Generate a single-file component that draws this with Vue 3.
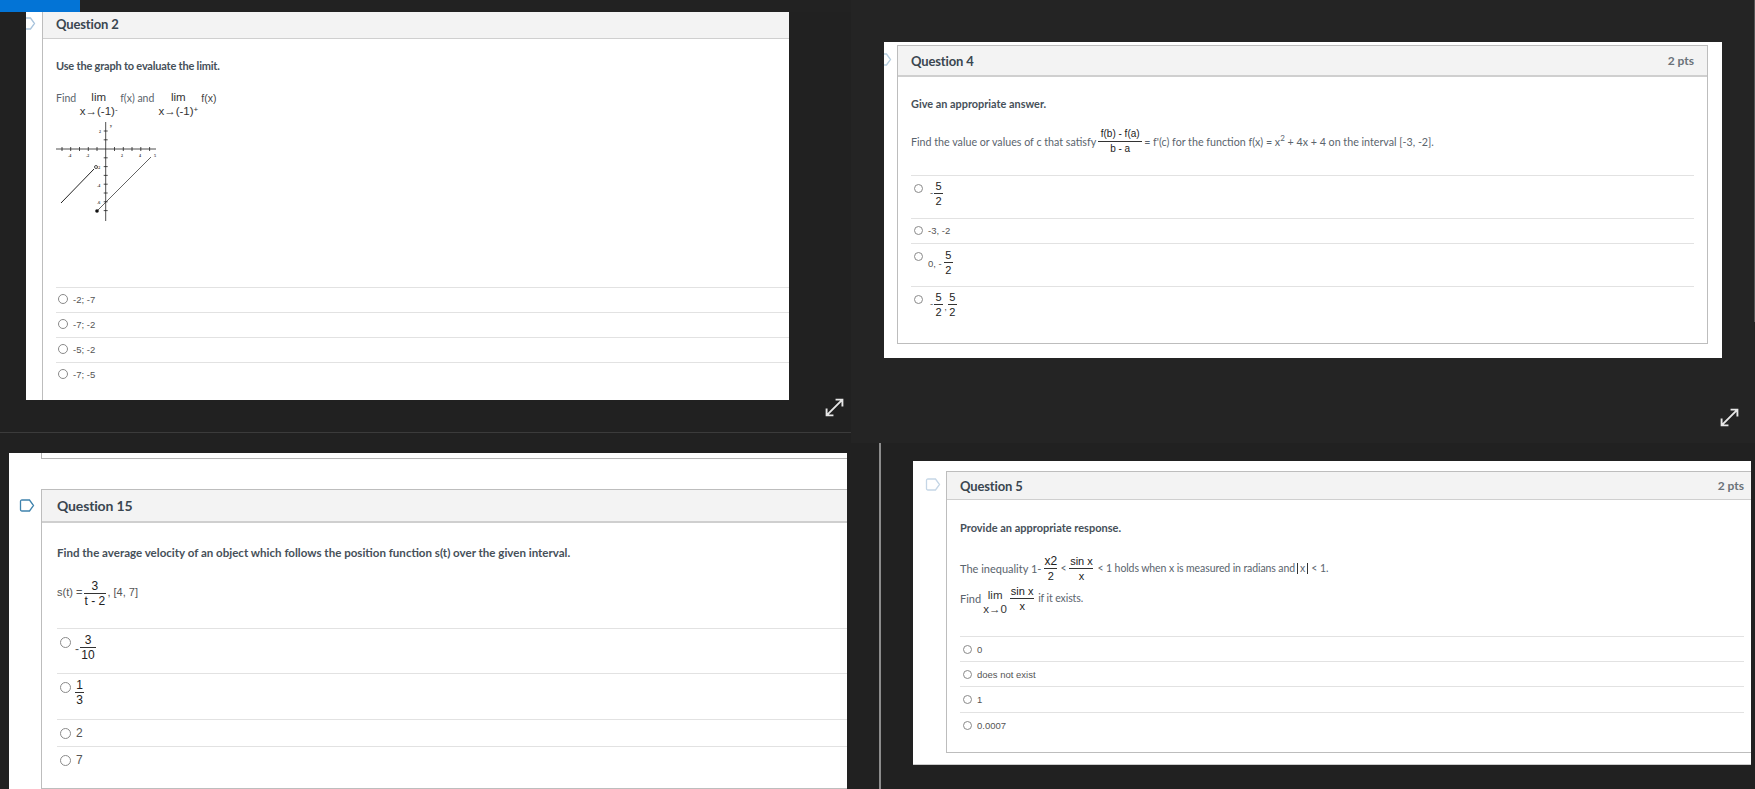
<script setup>
const q2Options = ['-2; -7', '-7; -2', '-5; -2', '-7; -5']
const q5Options = ['0', 'does not exist', '1', '0.0007']
const flagPath = 'M3 1 H10.5 L14.5 6.5 L10.5 12 H3 Q1.5 12 1.5 10.5 V2.5 Q1.5 1 3 1 Z'
const expandPath = 'M1.5 16.5 L16.5 1.5 M10 1.5 H16.5 V8 M1.5 10 V16.5 H8'
</script>

<template>
  <main class="desk">
    <div class="topbar"><span class="progress"></span></div>
    <div class="right-shade"></div>
    <div class="h-line"></div>
    <div class="v-line"></div>
    <div class="edge-line"></div>

    <!-- Question 2 -->
    <section class="panel p2">
      <svg class="flag f2" viewBox="0 0 16 13"><path :d="flagPath" /></svg>
      <div class="card">
        <header class="head"><span class="title">Question 2</span></header>
        <div class="body">
          <p class="lead">Use the graph to evaluate the limit.</p>
          <div class="line find-q2">
            <span>Find</span>
            <span class="limit l1"><i>lim</i><i>x→(-1)<sup>-</sup></i></span>
            <span class="m1">f(x) and</span>
            <span class="limit l2"><i>lim</i><i>x→(-1)<sup>+</sup></i></span>
            <span class="m2">f(x)</span>
          </div>
          <svg class="graph" width="102" height="102" viewBox="0 0 102 102">
            <g stroke="#222" fill="none" stroke-width=".8">
              <path d="M0 29 H100 M49.7 2 V101" />
              <path d="M6 27 v4 M14.7 27 v4 M23.5 27 v4 M32.3 27 v4 M41 27 v4 M58.5 27 v4 M67.3 27 v4 M76 27 v4 M84.8 27 v4 M93.6 27 v4" />
              <path d="M47.7 11 h4 M47.7 19.8 h4 M47.7 37.8 h4 M47.7 46.6 h4 M47.7 55.4 h4 M47.7 64.2 h4 M47.7 73 h4 M47.7 81.8 h4 M47.7 90.6 h4" />
              <path d="M5 83 L38 49" stroke-width="1" />
              <path d="M41 91 L95 37" stroke-width=".7" />
              <circle cx="40" cy="47" r="1.5" />
            </g>
            <circle cx="41" cy="91" r="1.8" fill="#111" />
            <g class="tick-labels">
              <text x="12" y="37">-4</text>
              <text x="30" y="37">-2</text>
              <text x="65" y="37">2</text>
              <text x="83" y="37">4</text>
              <text x="98" y="37">5</text>
              <text x="43" y="13">2</text>
              <text x="41" y="49">-2</text>
              <text x="41" y="67">-4</text>
              <text x="41" y="84">-6</text>
              <text x="54" y="7">y</text>
            </g>
          </svg>
          <ul class="opts o2">
            <li v-for="o in q2Options" :key="o"><span class="radio"></span><span>{{ o }}</span></li>
          </ul>
        </div>
      </div>
    </section>

    <!-- Question 4 -->
    <section class="panel p4">
      <svg class="flag f4" viewBox="0 0 16 13"><path :d="flagPath" /></svg>
      <div class="card">
        <header class="head"><span class="title">Question 4</span><span class="pts">2 pts</span></header>
        <div class="body">
          <p class="lead">Give an appropriate answer.</p>
          <div class="line eq4">
            <span class="cond">Find the value or values of c that satisfy</span>
            <span class="frac wide"><i>f(b) - f(a)</i><i>b - a</i></span>
            <span class="cond after">= f'(c) for the function f(x) = x<sup>2</sup> + 4x + 4 on the interval [-3, -2].</span>
          </div>
          <ul class="opts o4">
            <li class="tall t1"><span class="radio"></span><span class="minus">-</span><span class="frac"><i>5</i><i>2</i></span></li>
            <li class="plain"><span class="radio"></span><span>-3, -2</span></li>
            <li class="tall t2"><span class="radio"></span><span class="pre">0, -</span><span class="frac"><i>5</i><i>2</i></span></li>
            <li class="tall t3"><span class="radio"></span><span class="minus">-</span><span class="frac"><i>5</i><i>2</i></span><span class="comma">,</span><span class="frac"><i>5</i><i>2</i></span></li>
          </ul>
        </div>
      </div>
    </section>
    <svg class="expand e1" viewBox="0 0 18 18"><path :d="expandPath" /></svg>
    <svg class="expand e2" viewBox="0 0 18 18"><path :d="expandPath" /></svg>

    <!-- Question 15 -->
    <section class="panel p15">
      <div class="prev-card"></div>
      <svg class="flag f15" viewBox="0 0 16 13"><path :d="flagPath" /></svg>
      <div class="card">
        <header class="head"><span class="title">Question 15</span></header>
        <div class="body">
          <p class="lead">Find the average velocity of an object which follows the position function s(t) over the given interval.</p>
          <div class="line eq15">
            <span>s(t) =</span>
            <span class="frac wide"><i>3</i><i>t - 2</i></span>
            <span>, [4, 7]</span>
          </div>
          <ul class="opts o15">
            <li class="tall t1"><span class="radio"></span><span class="minus">-</span><span class="frac"><i>3</i><i>10</i></span></li>
            <li class="tall t2"><span class="radio"></span><span class="frac"><i>1</i><i>3</i></span></li>
            <li class="s1"><span class="radio"></span><span>2</span></li>
            <li class="s2"><span class="radio"></span><span>7</span></li>
          </ul>
        </div>
      </div>
    </section>

    <!-- Question 5 -->
    <section class="panel p5">
      <svg class="flag f5" viewBox="0 0 16 13"><path :d="flagPath" /></svg>
      <div class="card">
        <header class="head"><span class="title">Question 5</span><span class="pts">2 pts</span></header>
        <div class="body">
          <p class="lead">Provide an appropriate response.</p>
          <div class="line ineq">
            <span class="start">The inequality 1-</span>
            <span class="frac x2"><i>x2</i><i>2</i></span>
            <span class="lt">&lt;</span>
            <span class="frac sin"><i>sin x</i><i>x</i></span>
            <span class="rest">&lt; 1 holds when x is measured in radians and</span>
            <span class="abs">x</span>
            <span class="end">&lt; 1.</span>
          </div>
          <div class="line find5">
            <span class="start">Find</span>
            <span class="limit l5"><i>lim</i><i>x→0</i></span>
            <span class="frac sin s5"><i>sin x</i><i>x</i></span>
            <span class="rest">if it exists.</span>
          </div>
          <ul class="opts o5">
            <li v-for="o in q5Options" :key="o"><span class="radio"></span><span>{{ o }}</span></li>
          </ul>
        </div>
      </div>
    </section>
  </main>
</template>

<style scoped>
.desk {
  position: relative;
  width: 1755px;
  height: 789px;
  overflow: hidden;
  background: #212121;
  font-family: Lato, "Liberation Sans", sans-serif;
  color: #2d3b45;
}
.topbar { height: 12px; background: #222; }
.progress { display: block; width: 80px; height: 12px; background: #0374d6; }
.right-shade { position: absolute; left: 851px; top: 0; width: 904px; height: 443px; background: #242424; }
.h-line { position: absolute; left: 0; top: 432px; width: 851px; height: 1px; background: #3b3b3b; }
.v-line { position: absolute; left: 879px; top: 443px; width: 2px; height: 346px; background: #8c8c8c; }
.edge-line { position: absolute; left: 1754px; top: 0; width: 1px; height: 322px; background: #555; }

.expand { position: absolute; width: 19px; height: 19px; fill: none; stroke: #e6e6e6; stroke-width: 1.8; }
.e1 { left: 825px; top: 398px; }
.e2 { left: 1720px; top: 408px; }

.panel { position: absolute; background: #fff; overflow: hidden; }
.p2 { left: 26px; top: 12px; width: 763px; height: 388px; }
.p4 { left: 884px; top: 42px; width: 838px; height: 316px; }
.p15 { left: 9px; top: 453px; width: 838px; height: 336px; }
.p5 { left: 913px; top: 461px; width: 838px; height: 304px; border-bottom: 1px solid #ccc; box-sizing: border-box; }

.flag { position: absolute; fill: none; stroke-width: 1.3; }
.f2 { left: -6px; top: 5px; width: 16px; height: 13px; stroke: #a9c4dc; }
.f4 { left: -8px; top: 11px; width: 16px; height: 13px; stroke: #b7cfe0; }
.f15 { left: 10px; top: 46px; width: 16px; height: 13px; stroke: #3f83ad; }
.f5 { left: 12px; top: 17px; width: 16px; height: 13px; stroke: #c5d6e6; }

.card { box-sizing: border-box; border: 1px solid #bdbdbd; background: #fff; }
.p2 .card { margin-left: 16px; width: 800px; height: 420px; border-top: 0; }
.p4 .card { margin: 3px 14px 0 13px; height: 299px; }
.p15 .card { margin: 30px 0 0 32px; width: 860px; height: 300px; }
.p5 .card { margin: 10px 0 0 33px; width: 860px; height: 282px; }

.prev-card { box-sizing: border-box; margin-left: 32px; width: 860px; height: 6px; border: 1px solid #b5b5b5; border-top: 0; }

.head {
  display: flex;
  justify-content: space-between;
  align-items: center;
  box-sizing: border-box;
  background: #f3f3f3;
  border-bottom: 1px solid #cfcfcf;
  padding: 0 13px;
}
.p2 .head { height: 27px; padding-bottom: 2px; }
.p4 .head { height: 31px; border-bottom-width: 2px; }
.p15 .head { height: 33px; border-bottom-width: 2px; padding-left: 15px; }
.p5 .head { height: 28px; padding-right: 61px; }
.title { font-weight: 700; font-size: 13px; letter-spacing: -0.15px; color: #3a4650; }
.p15 .title { font-size: 14px; }
.pts { font-weight: 700; font-size: 12px; color: #6a7279; }

.body { padding: 0 13px; }
.p2 .body { width: 733px; }
.p5 .body { width: 784px; }
.p15 .body { width: 790px; padding-left: 15px; }

.lead { margin: 0; font-weight: 700; font-size: 11px; line-height: 14px; color: #465059; padding-top: 20px; }
.p2 .lead { letter-spacing: -0.2px; }
.p4 .lead { font-size: 10.9px; }
.p15 .lead { font-size: 11.55px; line-height: 16px; padding-top: 22px; }
.p5 .lead { font-size: 11px; padding-top: 21px; }

.line { display: flex; align-items: center; font-size: 10.5px; color: #5a646d; white-space: nowrap; }
.limit { display: inline-flex; flex-direction: column; align-items: center; font-family: "Liberation Sans", sans-serif; color: #333; font-size: 11.5px; line-height: 14px; }
.limit i { font-style: normal; }
.limit sup { font-size: 8px; line-height: 0; vertical-align: 3px; }
.frac { display: inline-flex; flex-direction: column; align-items: stretch; text-align: center; font-family: "Liberation Sans", sans-serif; color: #222; font-size: 11px; line-height: 14px; white-space: nowrap; }
.frac i { font-style: normal; display: block; }
.frac i:first-child { border-bottom: 1px solid #333; }
sup { font-size: 8px; line-height: 0; }

.find-q2 { margin-top: 17px; align-items: flex-start; height: 30px; }
.find-q2 > span:first-child, .find-q2 .m1, .find-q2 .m2 { margin-top: 2px; }
.l1 { margin-left: 4px; width: 37px; }
.m1 { margin-left: 3px; }
.l2 { margin-left: 5px; width: 38px; }
.m2 { margin-left: 4px; font-family: "Liberation Sans", sans-serif; color: #444; }
.graph { display: block; }
.tick-labels text { font: 700 4px "Liberation Serif", serif; fill: #333; }

.opts { list-style: none; margin: 0; padding: 0; font-family: "Liberation Sans", sans-serif; font-size: 9.5px; color: #555; }
.opts li { box-sizing: border-box; display: flex; align-items: center; height: 25px; border-top: 1px solid #e2e2e2; padding-left: 3px; }
.radio { box-sizing: border-box; flex: none; width: 9px; height: 9px; border: 1px solid #8a8a8a; border-radius: 50%; margin-right: 5px; }
.o2 { margin-top: 65px; }
.o2 li { padding-left: 2px; padding-bottom: 2px; }
.o2 .radio { width: 10px; height: 10px; }
.o4 .plain { padding-bottom: 2px; }

.eq4 { margin-top: 16px; height: 28px; }
.cond { font-size: 10.7px; }
.eq4 .frac { margin: 0 2px; width: 44px; font-size: 10px; }
.o4 { margin-top: 20px; }
.o4 li.tall { height: 43px; align-items: flex-start; }
.o4 .tall .radio { margin-top: 8px; }
.o4 .tall .frac { margin-top: 3px; width: 9px; }
.o4 .minus { margin: 11px 1px 0 2px; }
.o4 .pre { margin-top: 14px; margin-right: 2px; }
.o4 .t2 .frac { margin-top: 4px; }
.o4 .comma { margin: 14px 1px 0 1px; }

.eq15 { margin-top: 16px; height: 30px; font-family: "Liberation Sans", sans-serif; font-size: 11px; color: #555; }
.eq15 .frac { margin: 3px 1.5px 0; width: 22px; font-size: 12px; }
.o15 { margin-top: 21px; font-size: 12px; }
.o15 .radio { width: 11px; height: 11px; }
.o15 li.tall { height: 45px; align-items: flex-start; }
.o15 li.t2 { height: 46px; }
.o15 .tall .radio { margin-top: 8px; }
.o15 .tall .frac { margin-top: 4px; font-size: 12px; width: 16px; }
.o15 .t2 .radio { margin-right: 4px; }
.o15 .tall.t2 .frac { width: 9px; }
.o15 .minus { margin-top: 13px; margin-right: 1px; margin-left: -1px; }
.o15 .s1, .o15 .s2 { height: 27px; }

.ineq { margin-top: 18px; height: 30px; }
.start { font-size: 11px; }
.ineq .x2 { margin: 0 2px 0 3px; width: 13px; }
.x2 i:first-child { font-size: 12px; }
.lt { margin: 0 3px 0 1px; }
.ineq .sin { width: 24px; }
.rest { margin-left: 4px; letter-spacing: -0.1px; }
.abs { margin-left: 2px; padding: 0 2px; border-left: 1px solid #333; border-right: 1px solid #333; line-height: 11px; font-family: "Liberation Sans", sans-serif; }
.end { margin-left: 3px; }
.find5 { height: 30px; }
.l5 { margin-left: 3px; width: 22px; margin-top: 8px; }
.s5 { margin-left: 4px; width: 24px; margin-top: 1px; }
.o5 { margin-top: 23px; }
.o5 li { padding-top: 1px; }
.o5 li:last-child { margin-top: 1px; }
</style>

<style>
html, body { margin: 0; background: #212121; }
</style>
